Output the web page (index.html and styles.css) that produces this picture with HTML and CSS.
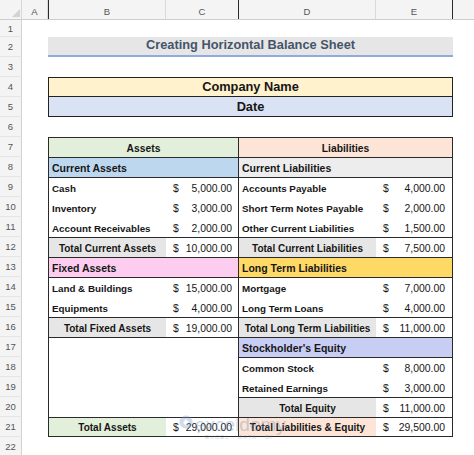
FILE: index.html
```html
<!DOCTYPE html>
<html lang="en">
<head>
  <meta charset="UTF-8" />
  <title>Creating Horizontal Balance Sheet</title>
  <link rel="stylesheet" href="styles.css">
</head>
<body>
  <div class="sheet">
    <!-- column letters -->
    <div class="colhead">
      <div class="corner"><span class="tri"></span></div>
      <div class="ch a">A</div>
      <div class="ch b">B</div>
      <div class="ch c">C</div>
      <div class="ch d">D</div>
      <div class="ch e">E</div>
      <div class="ch f"></div>
    </div>

    <div class="row r1"><div class="rh">1</div></div>
    <div class="row">
      <div class="rh">2</div><div class="a"></div>
      <div class="cell be title">Creating Horizontal Balance Sheet</div>
    </div>
    <div class="row"><div class="rh">3</div></div>
    <div class="row">
      <div class="rh">4</div><div class="a"></div>
      <div class="cell be company">Company Name</div>
    </div>
    <div class="row">
      <div class="rh">5</div><div class="a"></div>
      <div class="cell be date">Date</div>
    </div>
    <div class="row"><div class="rh">6</div></div>

    <!-- balance sheet -->
    <div class="row">
      <div class="rh">7</div><div class="a"></div>
      <div class="cell bc t hd assets">Assets</div>
      <div class="cell de t hd liab">Liabilities</div>
    </div>
    <div class="row">
      <div class="rh">8</div><div class="a"></div>
      <div class="cell bc t sec cur-a">Current Assets</div>
      <div class="cell de t sec cur-l">Current Liabilities</div>
    </div>
    <div class="row">
      <div class="rh">9</div><div class="a"></div>
      <div class="cell b t">Cash</div>
      <div class="cell c t amt"><span>$</span><span>5,000.00</span></div>
      <div class="cell d t">Accounts Payable</div>
      <div class="cell e t amt"><span>$</span><span>4,000.00</span></div>
    </div>
    <div class="row">
      <div class="rh">10</div><div class="a"></div>
      <div class="cell b">Inventory</div>
      <div class="cell c amt"><span>$</span><span>3,000.00</span></div>
      <div class="cell d">Short Term Notes Payable</div>
      <div class="cell e amt"><span>$</span><span>2,000.00</span></div>
    </div>
    <div class="row">
      <div class="rh">11</div><div class="a"></div>
      <div class="cell b">Account Receivables</div>
      <div class="cell c amt"><span>$</span><span>2,000.00</span></div>
      <div class="cell d">Other Current Liabilities</div>
      <div class="cell e amt"><span>$</span><span>1,500.00</span></div>
    </div>
    <div class="row">
      <div class="rh">12</div><div class="a"></div>
      <div class="cell b t tot">Total Current Assets</div>
      <div class="cell c t amt"><span>$</span><span>10,000.00</span></div>
      <div class="cell d t tot">Total Current Liabilities</div>
      <div class="cell e t amt"><span>$</span><span>7,500.00</span></div>
    </div>
    <div class="row">
      <div class="rh">13</div><div class="a"></div>
      <div class="cell bc t sec fixed">Fixed Assets</div>
      <div class="cell de t sec long">Long Term Liabilities</div>
    </div>
    <div class="row">
      <div class="rh">14</div><div class="a"></div>
      <div class="cell b t">Land &amp; Buildings</div>
      <div class="cell c t amt"><span>$</span><span>15,000.00</span></div>
      <div class="cell d t">Mortgage</div>
      <div class="cell e t amt"><span>$</span><span>7,000.00</span></div>
    </div>
    <div class="row">
      <div class="rh">15</div><div class="a"></div>
      <div class="cell b">Equipments</div>
      <div class="cell c amt"><span>$</span><span>4,000.00</span></div>
      <div class="cell d">Long Term Loans</div>
      <div class="cell e amt"><span>$</span><span>4,000.00</span></div>
    </div>
    <div class="row">
      <div class="rh">16</div><div class="a"></div>
      <div class="cell b t tot">Total Fixed Assets</div>
      <div class="cell c t amt"><span>$</span><span>19,000.00</span></div>
      <div class="cell d t tot">Total Long Term Liabilities</div>
      <div class="cell e t amt"><span>$</span><span>11,000.00</span></div>
    </div>
    <div class="row">
      <div class="rh">17</div><div class="a"></div>
      <div class="cell bc t"></div>
      <div class="cell de t sec equity">Stockholder's Equity</div>
    </div>
    <div class="row">
      <div class="rh">18</div><div class="a"></div>
      <div class="cell bc"></div>
      <div class="cell d t">Common Stock</div>
      <div class="cell e t amt"><span>$</span><span>8,000.00</span></div>
    </div>
    <div class="row">
      <div class="rh">19</div><div class="a"></div>
      <div class="cell bc"></div>
      <div class="cell d">Retained Earnings</div>
      <div class="cell e amt"><span>$</span><span>3,000.00</span></div>
    </div>
    <div class="row">
      <div class="rh">20</div><div class="a"></div>
      <div class="cell bc"></div>
      <div class="cell d t tot">Total Equity</div>
      <div class="cell e t amt"><span>$</span><span>11,000.00</span></div>
    </div>
    <div class="row">
      <div class="rh">21</div><div class="a"></div>
      <div class="cell b t bb tot grand-a">Total Assets</div>
      <div class="cell c t bb amt"><span>$</span><span>29,000.00</span></div>
      <div class="cell d t bb tot grand-l">Total Liabilities &amp; Equity</div>
      <div class="cell e t bb amt"><span>$</span><span>29,500.00</span></div>
    </div>
    <div class="row"><div class="rh">22</div></div>

    <!-- faint site watermark over the last rows -->
    <div class="watermark">
      <svg width="14" height="14" viewBox="0 0 14 14">
        <circle cx="7" cy="7" r="6.5" fill="#7d9cc4"/>
        <path d="M4 7.5 L7 4 L10 7.5 L7 11 Z" fill="#fff"/>
      </svg>
      <div class="wm-text">
        <span class="wm-name">exceldemy</span>
        <span class="wm-sub">EXCEL · DATA · BI</span>
      </div>
    </div>
  </div>
</body>
</html>
```

FILE: styles.css
```css
* { box-sizing: border-box; }

body {
  margin: 0;
  background: #fff;
  font-family: 'Liberation Sans', Arial, sans-serif;
  color: #161616;
}

.sheet {
  position: relative;
  width: 474px;
  height: 455px;
  overflow: hidden;
}

/* headers */
.colhead {
  display: flex;
  height: 20px;
  background: #f4f4f4;
  border-bottom: 1px solid #cdcdcd;
}
.corner {
  width: 22px;
  flex: none;
  border-right: 1px solid #d6d6d6;
  position: relative;
}
.tri {
  position: absolute;
  left: 12px;
  top: 9px;
  width: 0;
  height: 0;
  border-left: 8px solid transparent;
  border-bottom: 8px solid #d2d2d2;
}
.ch {
  flex: none;
  border-right: 1px solid #d9d9d9;
  text-align: center;
  font-size: 9.5px;
  color: #555;
  padding-top: 6px;
}
.ch.f { flex: 1; border-right: none; }

.row {
  display: flex;
  height: 20px;
}
.row.r1 { height: 17px; }

.rh {
  width: 22px;
  flex: none;
  background: #f4f4f4;
  border-right: 1px solid #d2d2d2;
  border-bottom: 1px solid #e4e4e4;
  font-size: 9.5px;
  color: #555;
  display: flex;
  align-items: center;
  justify-content: center;
}

/* column widths */
.a { width: 26px; flex: none; }
.b { width: 118px; }
.c { width: 73px; }
.d { width: 137px; }
.e { width: 77px; }
.bc { width: 191px; }
.de { width: 214px; }
.be { width: 405px; }

.cell {
  flex: none;
  display: flex;
  align-items: flex-end;
  padding: 0 3px 3px;
  font-size: 9.8px;
  font-weight: bold;
  white-space: nowrap;
  overflow: hidden;
}

/* borders of the sheet table */
.b, .bc { border-left: 1px solid #2a2a2a; }
.c, .bc, .e, .de { border-right: 1px solid #2a2a2a; }
.t { border-top: 1px solid #2a2a2a; }
.bb { border-bottom: 1px solid #2a2a2a; }

/* title and heading rows */
.title {
  justify-content: center;
  background: #e7e6e6;
  border-bottom: 2px solid #8faadc;
  color: #44546a;
  font-size: 12.8px;
  padding-bottom: 3px;
}
.company, .date {
  justify-content: center;
  font-size: 12.8px;
  border: 1px solid #222;
  padding-bottom: 2px;
}
.company { background: #fff2cc; }
.date { background: #dae3f3; border-top: none; }

.hd {
  justify-content: center;
  font-size: 10.3px;
}
.assets { background: #e2efda; }
.liab { background: #fce4d6; }

.sec { font-size: 10.5px; }
.cur-a { background: #bdd7ee; }
.cur-l { background: #ededed; }
.fixed { background: #fccdef; }
.long { background: #ffd966; }
.equity { background: #c8cdf4; }

.tot {
  justify-content: center;
  background: #e7e6e6;
  font-size: 10px;
}
.grand-a { background: #e2efda; }
.grand-l { background: #fce4d6; }

.amt {
  justify-content: space-between;
  font-weight: normal;
  font-size: 10.4px;
  padding: 0 6px 3px 7px;
}
.e.amt { padding-right: 7px; }

/* watermark */
.watermark {
  position: absolute;
  left: 179px;
  top: 415px;
  display: flex;
  align-items: flex-start;
  gap: 2px;
  opacity: 0.35;
}
.wm-text {
  display: flex;
  flex-direction: column;
  line-height: 1;
}
.wm-name {
  font-size: 19px;
  color: #6f8fb8;
}
.wm-sub {
  font-size: 6px;
  letter-spacing: 1px;
  color: #6f8fb8;
  padding-left: 10px;
}
```
